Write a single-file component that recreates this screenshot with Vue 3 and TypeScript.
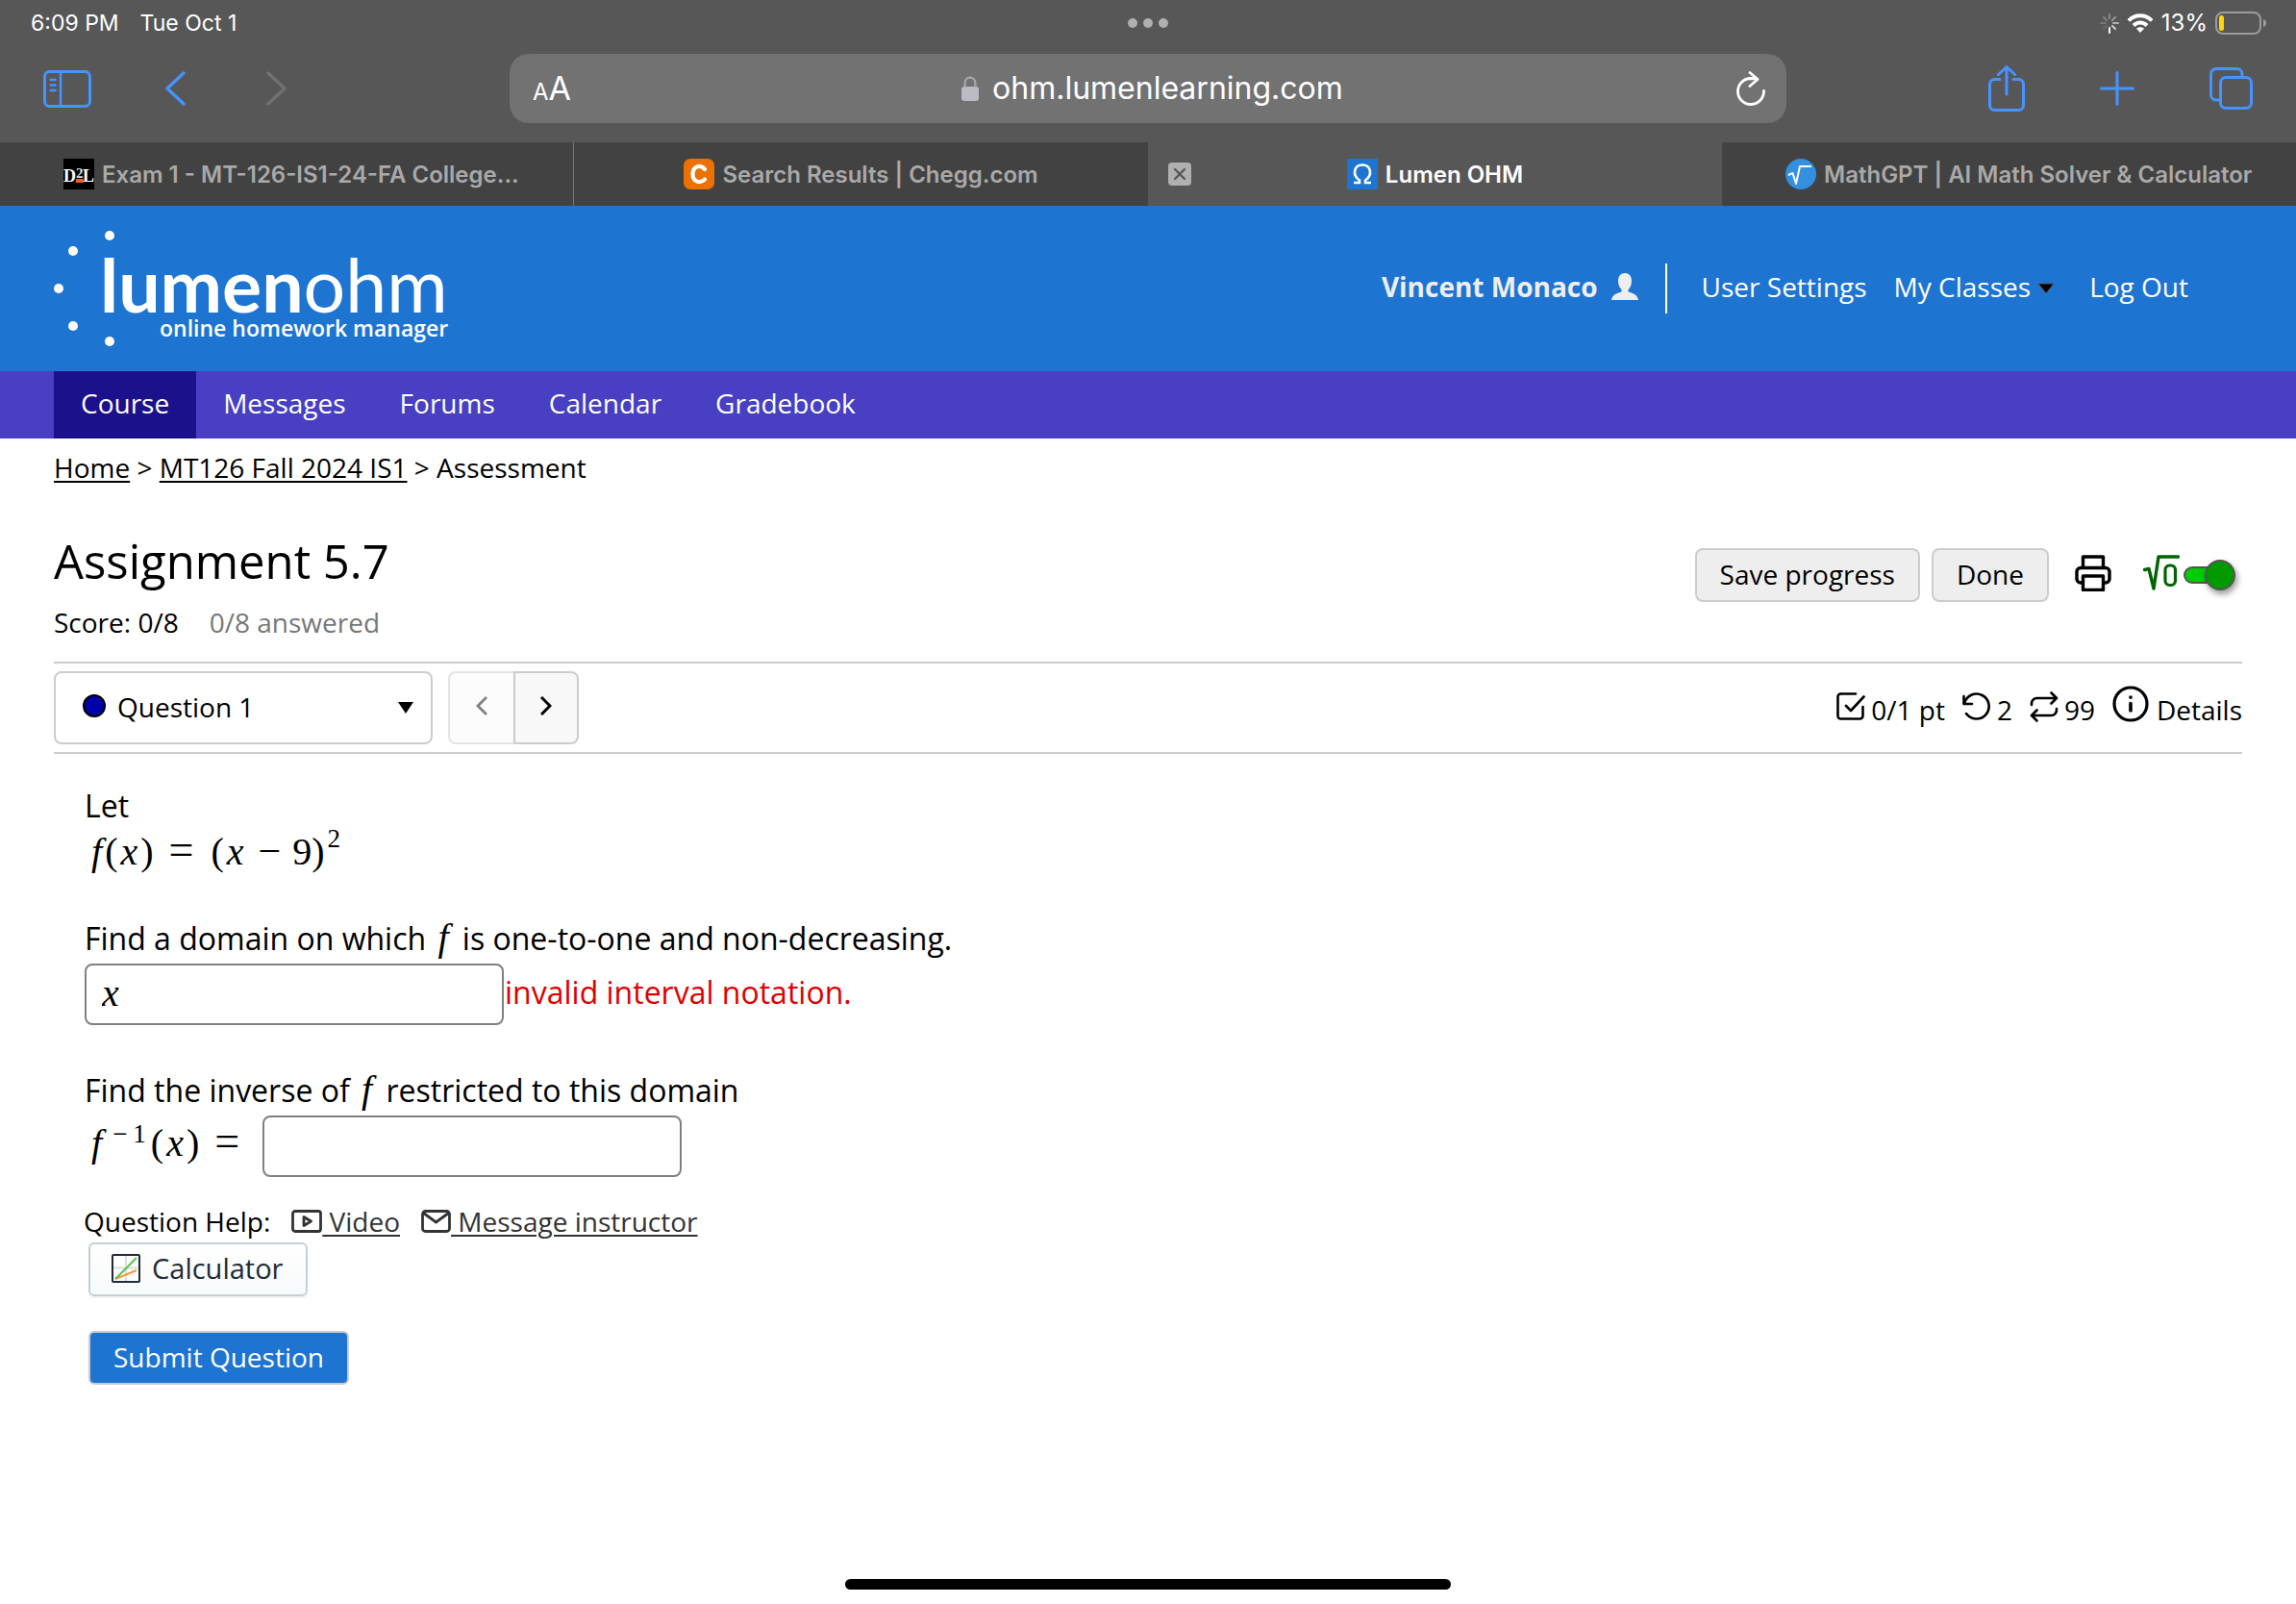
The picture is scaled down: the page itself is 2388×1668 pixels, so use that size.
<script setup lang="ts">
import { ref } from 'vue'

interface Tab {
  id: string
  title: string
  active?: boolean
  start?: boolean
}

const tabs: Tab[] = [
  { id: 'd2l', title: 'Exam 1 - MT-126-IS1-24-FA College...', start: true },
  { id: 'chegg', title: 'Search Results | Chegg.com' },
  { id: 'ohm', title: 'Lumen OHM', active: true },
  { id: 'gpt', title: 'MathGPT | AI Math Solver & Calculator', start: true },
]
const sections: string[] = ['Course', 'Messages', 'Forums', 'Calendar', 'Gradebook']

const address = ref('ohm.lumenlearning.com')
const question = ref('Question 1')
const mathEntry = ref(true)
const domain = ref('x')
const inverse = ref('')
</script>

<template>
  <div class="screen">
    <header class="browser">
      <div class="status">
        <div class="clock"><span>6:09 PM</span><span>Tue Oct 1</span></div>
        <div class="dots"><i></i><i></i><i></i></div>
        <div class="signals">
          <svg width="20" height="22" viewBox="0 0 20 22" fill="none" stroke-width="2" stroke-linecap="round">
            <path d="M10 2v4" stroke="#8c8c8c" /><path d="M16 5l-3 3" stroke="#989898" /><path d="M19 11h-5" stroke="#b0b0b0" />
            <path d="M16 17l-3-3" stroke="#d0d0d0" /><path d="M10 16v5" stroke="#fff" /><path d="M4 17l3-3" stroke="#6b6b6b" />
            <path d="M1 11h5" stroke="#777" /><path d="M4 5l3 3" stroke="#828282" />
          </svg>
          <svg width="28" height="20" viewBox="0 0 28 20" fill="none" stroke="#fff" stroke-width="4">
            <path d="M2 7.500C8.500 .500 19.500 .500 26 7.500" /><path d="M7 12.500c4-4 10-4 14 0" /><path d="M14 20l-4-4.300c2.300-2 5.700-2 8 0z" fill="#fff" stroke="none" />
          </svg>
          <span class="percent">13%</span>
          <svg width="54" height="24" viewBox="0 0 54 24">
            <rect x="1" y="1" width="46" height="22" rx="7" fill="none" stroke="#9c9c9c" stroke-width="2" />
            <rect x="4" y="4" width="5" height="16" rx="2.500" fill="#ffd60a" /><path d="M50 8q3 1 3 4t-3 4z" fill="#9c9c9c" />
          </svg>
        </div>
      </div>

      <div class="toolbar">
        <div class="tools-left">
          <button class="icon-btn" type="button" aria-label="Show sidebar">
            <svg width="50" height="39" viewBox="0 0 50 39" fill="none" stroke="#4793ff" stroke-width="3" stroke-linecap="round">
              <rect x="1.500" y="1.500" width="47" height="36" rx="5" /><path d="M18 2v35M7.500 10h5M7.500 15.500h5M7.500 21h5" stroke-width="2.500" />
            </svg>
          </button>
          <button class="icon-btn back" type="button" aria-label="Back">
            <svg width="21" height="36" viewBox="0 0 21 36" fill="none" stroke="#4793ff" stroke-width="3.400" stroke-linecap="round" stroke-linejoin="round"><path d="M19 2L2 18l17 16" /></svg>
          </button>
          <button class="icon-btn forward" type="button" aria-label="Forward">
            <svg width="21" height="36" viewBox="0 0 21 36" fill="none" stroke="#717171" stroke-width="3.400" stroke-linecap="round" stroke-linejoin="round"><path d="M2 2l17 16L2 34" /></svg>
          </button>
        </div>
        <div class="address">
          <button class="aa" type="button" aria-label="Page settings"><small>A</small>A</button>
          <div class="url">
            <svg width="18" height="26" viewBox="0 0 18 26">
              <rect x="0" y="11" width="18" height="15" rx="3" fill="#bcbbc3" /><path d="M3.500 12V8C3.500-.500 14.500-.500 14.500 8v4" fill="none" stroke="#a9a8b0" stroke-width="2.200" />
            </svg>
            <input v-model="address" type="text" aria-label="Address" />
          </div>
          <button class="icon-btn" type="button" aria-label="Reload">
            <svg width="30" height="36" viewBox="0 0 30 36" fill="none" stroke="#fff" stroke-width="2.800" stroke-linecap="round" stroke-linejoin="round"><path d="M28.500 20.500A13.500 13.500 0 1 1 15 7.500L21.500 8" /><path d="M14 1.500L22 8.500 14 15.500" /></svg>
          </button>
        </div>
        <div class="tools-right">
          <button class="icon-btn" type="button" aria-label="Share">
            <svg width="38" height="48" viewBox="0 0 38 48" fill="none" stroke="#4793ff" stroke-width="3" stroke-linecap="round" stroke-linejoin="round"><path d="M12 14.500H6.500a5 5 0 0 0-5 5v22a5 5 0 0 0 5 5h25a5 5 0 0 0 5-5v-22a5 5 0 0 0-5-5H26M19 30V2M10.500 9.500L19 1.500l8.500 8" /></svg>
          </button>
          <button class="icon-btn" type="button" aria-label="New tab">
            <svg width="36" height="36" viewBox="0 0 36 36" stroke="#4793ff" stroke-width="3" stroke-linecap="round"><path d="M18 1.500v33M1.500 18h33" /></svg>
          </button>
          <button class="icon-btn" type="button" aria-label="All tabs">
            <svg width="45" height="44" viewBox="0 0 45 44" fill="none" stroke="#4793ff" stroke-width="3"><path d="M10 34H7a5.500 5.500 0 0 1-5.500-5.500V7A5.500 5.500 0 0 1 7 1.500h21.500A5.500 5.500 0 0 1 34 7v3" /><rect x="11.500" y="10.500" width="32" height="32" rx="5.500" /></svg>
          </button>
        </div>
      </div>

      <nav class="tabs" aria-label="Browser tabs">
        <div v-for="t in tabs" :key="t.id" class="tab" :class="{ active: t.active, start: t.start }">
          <button v-if="t.active" class="close" type="button" aria-label="Close tab">
            <svg width="24" height="24" viewBox="0 0 24 24"><rect width="24" height="24" rx="4" fill="#b0b0b0" /><path d="M7 7l10 10M17 7L7 17" stroke="#575757" stroke-width="2.400" stroke-linecap="round" /></svg>
          </button>
          <svg class="favicon" width="32" height="32" viewBox="0 0 32 32">
            <template v-if="t.id === 'd2l'">
              <rect width="32" height="32" fill="#000" />
              <text x="0" y="24" class="d2l" fill="#fff">D</text><text x="20" y="24" class="d2l" fill="#fff">L</text>
              <text x="13" y="20" class="d2l-two" fill="#ddd">2</text><rect x="13" y="21" width="8" height="4" fill="#e0641c" />
            </template>
            <template v-else-if="t.id === 'chegg'">
              <rect width="32" height="32" rx="7" fill="#eb7100" />
              <path d="M22 11C17 5.500 9.500 8 9.500 16S17 26.500 22 21.500" fill="none" stroke="#fff" stroke-width="4.200" stroke-linecap="round" />
            </template>
            <template v-else-if="t.id === 'ohm'">
              <rect width="32" height="32" fill="#1e74d1" />
              <path d="M7 25h6v-2.500C5 17 7 6.500 16 6.500S27 17 19 22.500V25h6" fill="none" stroke="#fff" stroke-width="2.600" />
            </template>
            <template v-else>
              <circle cx="16" cy="16" r="16" fill="#338fe0" />
              <path d="M3 17l4.500-2L11 26 15 8h12" fill="none" stroke="#fff" stroke-width="2" stroke-linejoin="round" />
            </template>
          </svg>
          <a href="#" class="tab-title">{{ t.title }}</a>
        </div>
      </nav>
    </header>

    <div class="masthead">
      <a href="#" class="logo" aria-label="Lumen OHM, online homework manager">
        <svg class="sparks" width="64" height="120" viewBox="0 0 64 120" fill="#fff">
          <circle cx="58" cy="5" r="5" /><circle cx="20" cy="21" r="5" /><circle cx="5" cy="60" r="5" /><circle cx="20" cy="99" r="5" /><circle cx="58" cy="115" r="5" />
        </svg>
        <span class="words">
          <span class="brand"><b>lumen</b>ohm</span>
          <span class="tagline">online homework manager</span>
        </span>
      </a>
      <div class="account">
        <span class="user">Vincent Monaco
          <svg width="28" height="28" viewBox="0 0 28 28" fill="#eee"><path d="M14 0c5 0 7 4 7 8 0 4-1.500 7.500-3.500 9v2.500C22 21 27 22 28 28H0c1-6 6-7 10.500-8.500V17C8.500 15.500 7 12 7 8c0-4 2-8 7-8z" /></svg>
        </span>
        <a href="#">User Settings</a>
        <a href="#" class="classes">My Classes
          <svg width="18" height="12" viewBox="0 0 18 12"><path d="M1 1h16L9 11z" stroke="#555" stroke-width="1" /></svg>
        </a>
        <a href="#">Log Out</a>
      </div>
    </div>

    <nav class="sections" aria-label="Course">
      <a v-for="(s, i) in sections" :key="s" href="#" :class="{ current: i === 0 }">{{ s }}</a>
    </nav>

    <main>
      <div class="crumbs"><a href="#">Home</a> &gt; <a href="#">MT126 Fall 2024 IS1</a> &gt; Assessment</div>

      <div class="heading">
        <div>
          <h1>Assignment 5.7</h1>
          <p class="score"><span>Score: 0/8</span><span class="answered">0/8 answered</span></p>
        </div>
        <div class="actions">
          <button class="btn" type="button">Save progress</button>
          <button class="btn" type="button">Done</button>
          <button class="icon-btn print" type="button" aria-label="Print">
            <svg width="38" height="38" viewBox="0 0 38 38" fill="none" stroke="#000" stroke-width="3.400" stroke-linejoin="round"><path d="M8.500 13.500V2h21v11.500M8.500 29H6a4 4 0 0 1-4-4v-7.500a4 4 0 0 1 4-4h26a4 4 0 0 1 4 4V25a4 4 0 0 1-4 4h-2.500" /><rect x="8.500" y="22" width="21" height="14.500" /></svg>
          </button>
          <label class="toggle">
            <svg width="38" height="38" viewBox="0 0 38 38" fill="none" stroke="#006400" stroke-width="3.400" stroke-linecap="round" stroke-linejoin="round" role="img" aria-label="Equation editor"><path d="M1.500 15.500l4.500-1L11 35 16 2h20.500" /><rect x="23" y="11" width="10.500" height="20.500" rx="4.500" stroke-width="3.200" /></svg>
            <input v-model="mathEntry" type="checkbox" />
          </label>
        </div>
      </div>

      <div class="question-bar">
        <div class="picker">
          <svg class="marker" width="24" height="24" viewBox="0 0 24 24"><circle cx="12" cy="12" r="11" fill="#0000a8" stroke="#000" stroke-width="2" /></svg>
          <select v-model="question" aria-label="Question">
            <option>Question 1</option>
          </select>
          <svg class="arrow" width="16" height="12" viewBox="0 0 16 12"><path d="M0 0h16L8 12z" /></svg>
        </div>
        <div class="pager">
          <button type="button" disabled aria-label="Previous question">
            <svg width="12" height="20" viewBox="0 0 12 20" fill="none" stroke="#808080" stroke-width="2.800"><path d="M11 1L2 10l9 9" /></svg>
          </button>
          <button type="button" aria-label="Next question">
            <svg width="12" height="20" viewBox="0 0 12 20" fill="none" stroke="#000" stroke-width="3"><path d="M1 1l9 9-9 9" /></svg>
          </button>
        </div>
        <div class="meta">
          <span>
            <svg width="30" height="30" viewBox="0 0 30 30" fill="none" stroke="#000" stroke-width="2.600" stroke-linecap="round" stroke-linejoin="round"><path d="M10 14l5 5L28.500 4.500" /><path d="M27.500 15v9.500a3 3 0 0 1-3 3h-20a3 3 0 0 1-3-3v-20a3 3 0 0 1 3-3H20" /></svg>
            0/1 pt
          </span>
          <span>
            <svg width="30" height="30" viewBox="0 0 30 30" fill="none" stroke="#000" stroke-width="2.600" stroke-linecap="round" stroke-linejoin="round"><path d="M1.500 4v8h8.500" /><path d="M2 11.500A13 13 0 1 1 4 22" /></svg>
            2
          </span>
          <span>
            <svg width="30" height="32" viewBox="0 0 30 32" fill="none" stroke="#000" stroke-width="2.600" stroke-linecap="round" stroke-linejoin="round"><path d="M22.500 1.500L28 7l-5.500 5.500M28 7H7.500a5.500 5.500 0 0 0-5.500 5.500V14M7.500 30.500L2 25l5.500-5.500M2 25h20.500a5.500 5.500 0 0 0 5.500-5.500V18" /></svg>
            99
          </span>
          <a href="#" class="details">
            <svg width="38" height="38" viewBox="0 0 38 38" fill="none" stroke="#000" stroke-width="3.200" stroke-linecap="round"><circle cx="19" cy="19" r="17" /><path d="M19 18.500V26M19 12v.200" stroke-width="3.600" /></svg>
            Details
          </a>
        </div>
      </div>

      <form class="question" @submit.prevent>
        <p>Let</p>
        <p class="math formula"><i>f</i><span>(</span><i>x</i><span>)</span><span class="rel">=</span><span>(</span><i>x</i><span class="bin">−</span><span>9)</span><sup>2</sup></p>

        <p class="prompt"><label for="domain">Find a domain on which <i class="math">f</i> is one-to-one and non-decreasing.</label></p>
        <div class="field">
          <input id="domain" v-model="domain" type="text" class="math-input" /><span class="error">invalid interval notation.</span>
        </div>

        <p class="prompt second"><label for="inverse">Find the inverse of <i class="math">f</i> restricted to this domain</label></p>
        <div class="field">
          <span class="math lead"><i>f</i><sup><span>−</span><span>1</span></sup><span>(</span><i>x</i><span>)</span><span class="rel">=</span></span>
          <input id="inverse" v-model="inverse" type="text" class="math-input" />
        </div>

        <div class="help">
          <span>Question Help:</span>
          <a href="#">
            <svg width="32" height="24" viewBox="0 0 32 24" fill="none" stroke="#333" stroke-width="2.800" stroke-linejoin="round"><rect x="1.500" y="1.500" width="29" height="21" rx="2.500" /><path d="M13 7.500v9l7.500-4.500z" /></svg><span>&nbsp;Video</span>
          </a>
          <a href="#">
            <svg width="31" height="24" viewBox="0 0 31 24" fill="none" stroke="#333" stroke-width="2.800" stroke-linejoin="round"><rect x="1.500" y="1.500" width="28" height="21" rx="3" /><path d="M2.500 3.500l13 9.500 13-9.500" /></svg><span>&nbsp;Message instructor</span>
          </a>
        </div>
        <button class="calculator" type="button">
          <svg width="30" height="30" viewBox="0 0 30 30" fill="none"><rect x="1" y="1" width="28" height="28" rx="1" fill="#fff" stroke="#1f2b38" stroke-width="2" /><path d="M15 2v26M2 14.500h26" stroke="#ddd" stroke-width="2" /><path d="M4 26l22-9" stroke="#fa9645" stroke-width="2" /><path d="M4 26L26 4" stroke="#5cc04a" stroke-width="2" /></svg>
          Calculator
        </button>
        <button class="submit" type="submit">Submit Question</button>
      </form>
    </main>

    <div class="home-indicator"></div>
  </div>
</template>

<style>
body {
  margin: 0;
  background: #fff;
}
</style>

<style scoped>
* {
  box-sizing: border-box;
}
.screen {
  display: flex;
  flex-direction: column;
  min-height: 100vh;
  font: 28px/40px "Open Sans", "Noto Sans", sans-serif;
  color: #000;
}
svg {
  display: block;
  flex: none;
}
button,
input,
select {
  font: inherit;
  color: inherit;
  margin: 0;
}
a {
  color: inherit;
}
p,
h1 {
  margin: 0;
  font-weight: 400;
}
.icon-btn {
  display: block;
  padding: 0;
  border: 0;
  background: none;
}

/* browser chrome */
.browser {
  background: #575757;
  color: #fff;
  font-family: Inter, "Liberation Sans", sans-serif;
}
.status {
  display: grid;
  grid-template-columns: 1fr auto 1fr;
  align-items: center;
  height: 48px;
  padding: 0 30px;
  font-size: 23px;
}
.clock {
  display: flex;
  gap: 22px;
  padding-left: 2px;
}
.dots {
  display: flex;
  gap: 6px;
}
.dots i {
  width: 10px;
  height: 10px;
  border-radius: 50%;
  background: #b0b0b0;
}
.signals {
  display: flex;
  align-items: center;
  justify-content: flex-end;
  gap: 8px;
}
.percent {
  font-size: 24px;
}
.toolbar {
  display: grid;
  grid-template-columns: 1fr 1328px 1fr;
  align-items: center;
  height: 100px;
  padding: 8px 45px 20px;
}
.tools-left,
.tools-right {
  display: flex;
  align-items: center;
}
.back {
  margin-left: 77px;
}
.forward {
  margin-left: 84px;
}
.tools-right {
  justify-content: flex-end;
  gap: 78px;
}
.address {
  display: flex;
  align-items: center;
  justify-content: space-between;
  height: 72px;
  padding: 0 22px;
  border-radius: 20px;
  background: #727272;
}
.aa {
  padding: 4px 0 0 2px;
  border: 0;
  background: none;
  font-size: 34px;
}
.aa small {
  font-size: 24px;
}
.url {
  display: flex;
  align-items: center;
  gap: 14px;
}
.url input {
  width: 368px;
  padding: 0;
  border: 0;
  background: none;
  font-size: 32px;
}
.tabs {
  display: grid;
  grid-template-columns: repeat(4, 1fr);
  height: 66px;
}
.tab {
  position: relative;
  display: flex;
  align-items: center;
  justify-content: center;
  gap: 8px;
  min-width: 0;
  background: #424242;
  color: #a9a9a9;
  font-size: 24px;
  font-weight: 600;
}
.tab:first-child {
  border-right: 1px solid #777;
}
.tab.start {
  justify-content: flex-start;
  padding-left: 66px;
}
.tab.active {
  background: #575757;
  color: #fff;
}
.tab-title {
  padding-top: 2px;
  white-space: nowrap;
  text-decoration: none;
}
.close {
  position: absolute;
  left: 21px;
  padding: 0;
  border: 0;
  background: none;
}
.d2l {
  font: bold 18px "Liberation Serif", serif;
}
.d2l-two {
  font: bold 15px "Liberation Serif", serif;
}

/* site header */
.masthead {
  display: flex;
  align-items: center;
  justify-content: space-between;
  height: 172px;
  padding: 0 112px 0 56px;
  background: #1e74d1;
  color: #fff;
}
.logo {
  display: flex;
  align-items: center;
  text-decoration: none;
}
.words {
  display: flex;
  flex-direction: column;
  margin-left: -16px;
  padding-top: 18px;
}
.brand {
  font: 400 77px/64px Lato, sans-serif;
}
.tagline {
  margin-left: 62px;
  font: 600 23px/28px "Open Sans", sans-serif;
}
.account {
  display: flex;
  align-items: center;
  gap: 28px;
}
.account a {
  padding-bottom: 4px;
  text-decoration: none;
}
.user {
  display: flex;
  align-items: center;
  gap: 14px;
  height: 52px;
  padding: 0 28px 4px 0;
  margin-right: 8px;
  border-right: 2px solid #fff;
  color: #eee;
  font-weight: 700;
}
.account .classes {
  display: flex;
  align-items: center;
  gap: 7px;
  margin-right: 8px;
}
.classes svg {
  margin-top: 4px;
}
.sections {
  display: flex;
  padding: 0 56px;
  background: #483fc3;
  color: #fff;
}
.sections a {
  padding: 13px 28px 17px;
  text-decoration: none;
}
.sections .current {
  background: #1b118b;
}

/* assessment */
main {
  padding: 10px 56px 0;
}
.crumbs a,
.help a span {
  text-decoration-thickness: 2px;
  text-underline-offset: 3px;
}
.heading {
  display: flex;
  justify-content: space-between;
  align-items: flex-start;
  margin-top: 45px;
  padding-bottom: 21px;
}
h1 {
  font-size: 49px;
  line-height: 64px;
}
.score {
  display: flex;
  gap: 32px;
  margin-top: 12px;
}
.answered {
  color: #777;
}
.actions {
  display: flex;
  align-items: center;
  gap: 12px;
  margin-top: 19px;
  padding-right: 7px;
}
.btn {
  height: 56px;
  padding: 0 24px 2px;
  border: 2px solid #ccc;
  border-radius: 8px;
  background: #eee;
}
.print {
  margin: 0 21px 4px 15px;
}
.toggle {
  display: flex;
  align-items: center;
  gap: 4px;
}
.toggle svg {
  margin-bottom: 4px;
}
.toggle input {
  position: relative;
  width: 54px;
  height: 32px;
  appearance: none;
}
.toggle input::before {
  content: "";
  position: absolute;
  inset: 7px 20px 7px 0;
  border: 2px solid #555;
  border-radius: 9px;
  background: #0c0;
}
.toggle input::after {
  content: "";
  position: absolute;
  inset: 0 0 0 22px;
  border: 2px solid #555;
  border-radius: 50%;
  background: #090;
  box-shadow: 2px 4px 6px rgba(0, 0, 0, 0.4);
}
.question-bar {
  display: flex;
  align-items: center;
  padding: 8px 0;
  border-top: 2px solid #ccc;
  border-bottom: 2px solid #ccc;
}
.picker {
  position: relative;
}
.picker select {
  display: block;
  width: 394px;
  height: 76px;
  padding: 0 64px 2px 64px;
  border: 2px solid #ccc;
  border-radius: 8px;
  background: #fff;
  appearance: none;
}
.marker {
  position: absolute;
  left: 30px;
  top: 24px;
}
.arrow {
  position: absolute;
  right: 20px;
  top: 32px;
}
.pager {
  display: flex;
  margin-left: 16px;
}
.pager button {
  display: flex;
  align-items: center;
  justify-content: center;
  width: 68px;
  height: 76px;
  padding: 0 0 4px;
  border: 2px solid #ccc;
  border-radius: 0 8px 8px 0;
  background: #f8f8f8;
}
.pager button:disabled {
  border-color: #e4e4e4;
  border-right: 0;
  border-radius: 8px 0 0 8px;
  background: #fcfcfc;
}
.meta {
  display: flex;
  align-items: center;
  gap: 18px;
  margin-left: auto;
  padding-top: 4px;
}
.meta > * {
  display: flex;
  align-items: center;
  gap: 6px;
}
.meta svg {
  margin-bottom: 6px;
}
.meta .details {
  gap: 8px;
  text-decoration: none;
}
.meta .details svg {
  margin-bottom: 12px;
}
.question {
  display: flex;
  flex-direction: column;
  align-items: flex-start;
  padding: 30px 32px 0;
  font-size: 32px;
  line-height: 48px;
}
.math {
  font-family: "Liberation Serif", serif;
  font-size: 40px;
}
.prompt .math {
  margin: 0 6px 0 4px;
  line-height: 40px;
}
.formula,
.lead {
  display: flex;
  align-items: baseline;
  gap: 3px;
  padding-left: 7px;
}
.rel {
  margin: 0 15px 0 13px;
  font-size: 46px;
  line-height: 44px;
}
.bin {
  margin: 0 9px 0 12px;
  font-size: 42px;
  line-height: 44px;
}
.math sup {
  align-self: flex-start;
  font-size: 27px;
  line-height: 20px;
}
.lead sup {
  display: flex;
  gap: 6px;
  margin: 0 2px 0 8px;
  line-height: 28px;
}
.prompt {
  margin: 42px 0 2px;
}
.second {
  margin-top: 44px;
}
.field {
  display: flex;
  align-items: center;
}
.math-input {
  width: 436px;
  height: 64px;
  padding: 0 16px 4px;
  border: 2px solid #808080;
  border-radius: 8px;
  background: #fff;
  font: italic 40px "Liberation Serif", serif;
}
.error {
  padding: 0 0 4px 1px;
  color: #d00;
}
.lead {
  padding-right: 9px;
  padding-bottom: 6px;
}
.help {
  display: flex;
  margin: 26px 0 0 -1px;
  font-size: 28px;
  line-height: 40px;
}
.help a {
  display: flex;
  align-items: center;
  margin-left: 22px;
  color: #333;
  text-decoration: none;
}
.help a span {
  text-decoration-line: underline;
}
.calculator,
.submit {
  height: 56px;
  margin-left: 4px;
  padding: 0 24px 2px;
  border: 2px solid #ccc;
  border-radius: 6px;
  font-size: 28px;
}
.calculator {
  display: flex;
  align-items: center;
  gap: 12px;
  margin-top: 2px;
  padding-left: 22px;
  border-color: #c4d0d8;
  background: linear-gradient(#fff, #f7f9fa);
  box-shadow: 0 2px 2px rgba(0, 0, 0, 0.06);
  color: #1f2b38;
  font-size: 29px;
}
.submit {
  margin-top: 36px;
  background: #1e74d1;
  color: #fff;
}
.home-indicator {
  width: 630px;
  max-width: 60%;
  height: 11px;
  margin: auto auto 15px;
  border-radius: 6px;
  background: #000;
}
</style>
